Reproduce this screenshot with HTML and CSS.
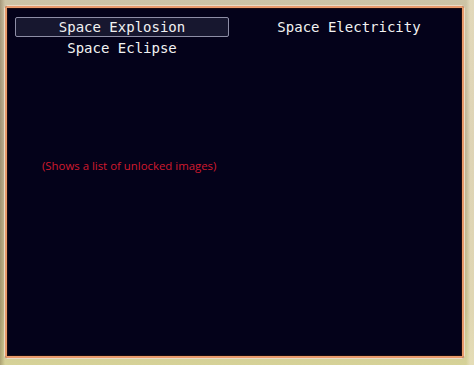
FILE: index.html
```html
<!DOCTYPE html>
<html>
<head>
<meta charset="utf-8">
<link rel="stylesheet" href="styles.css">
</head>
<body>
<div class="scene">
  <div class="window">
    <div class="inner">
      <div class="list">
        <div class="item selected">Space Explosion</div>
        <div class="item">Space Electricity</div>
        <div class="item">Space Eclipse</div>
      </div>
      <p class="note">(Shows a list of unlocked images)</p>
    </div>
  </div>
</div>
</body>
</html>
```
FILE: styles.css
```css
html, body {
  margin: 0;
  padding: 0;
}
body {
  width: 474px;
  height: 365px;
  overflow: hidden;
  background:
    linear-gradient(90deg, rgba(110,90,60,0.4) 0px, rgba(200,190,160,0) 5px, rgba(0,0,0,0) 466px, rgba(235,225,195,0.7) 470px),
    linear-gradient(180deg, #cdc4a6 0px, #bfb496 40%, #c6bd8c 85%, #d6d298 100%);
}
.scene {
  padding: 5px 0 0 4px;
}
.window {
  width: 459px;
  height: 352px;
  border: 1px solid #eadbc4;
  border-radius: 3px;
  background: #2a1408;
}
.inner {
  box-sizing: border-box;
  height: 100%;
  border: 2px solid #e89a6c;
  border-radius: 2px;
  background: #04021a;
  box-shadow: inset 0 0 0 1px #1a0c10;
  padding: 9px 6px 0 8px;
}
.list {
  display: grid;
  grid-template-columns: 214px 214px;
  column-gap: 13px;
  row-gap: 1px;
}
.item {
  box-sizing: border-box;
  height: 20px;
  line-height: 18px;
  border: 1px solid transparent;
  text-align: center;
  color: #f2f2f2;
  font-family: "DejaVu Sans Mono", monospace;
  font-size: 14px;
}
.item.selected {
  border-color: #8e8ea6;
  border-radius: 2px;
  background: #17172f;
}
.note {
  margin: 100px 0 0 27px;
  color: #d11a2e;
  font-family: "Open Sans", sans-serif;
  font-size: 11.4px;
  line-height: 15px;
}
```
